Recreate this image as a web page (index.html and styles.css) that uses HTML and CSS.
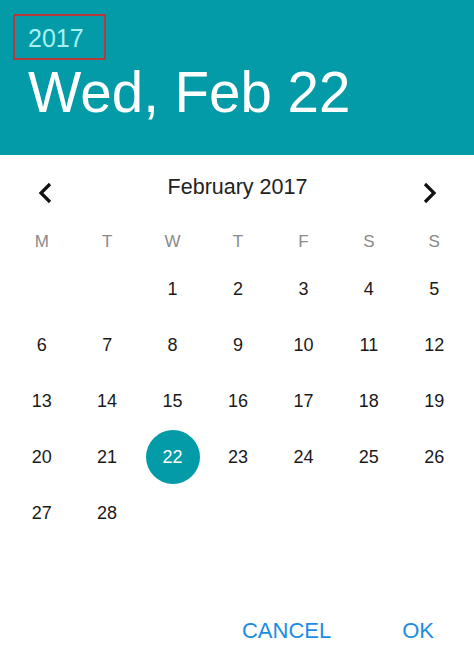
FILE: index.html
```html
<!DOCTYPE html>
<html>
<head>
<meta charset="utf-8">
<link rel="stylesheet" href="styles.css">
</head>
<body>
<div class="picker">
  <header class="header">
    <div class="year-box"><span class="year">2017</span></div>
    <div class="date">Wed, Feb 22</div>
  </header>
  <section class="calendar">
    <div class="nav">
      <span class="arrow">
        <svg width="20" height="24" viewBox="0 0 20 24"><path d="M14 3 L5 12 L14 21" fill="none" stroke="#111" stroke-width="3.2"/></svg>
      </span>
      <span class="month">February 2017</span>
      <span class="arrow">
        <svg width="20" height="24" viewBox="0 0 20 24"><path d="M6 3 L15 12 L6 21" fill="none" stroke="#111" stroke-width="3.2"/></svg>
      </span>
    </div>
    <div class="weekdays">
      <span>M</span><span>T</span><span>W</span><span>T</span><span>F</span><span>S</span><span>S</span>
    </div>
    <div class="days">
      <span></span><span></span><span>1</span><span>2</span><span>3</span><span>4</span><span>5</span>
      <span>6</span><span>7</span><span>8</span><span>9</span><span>10</span><span>11</span><span>12</span>
      <span>13</span><span>14</span><span>15</span><span>16</span><span>17</span><span>18</span><span>19</span>
      <span>20</span><span>21</span><span class="selected"><b>22</b></span><span>23</span><span>24</span><span>25</span><span>26</span>
      <span>27</span><span>28</span>
    </div>
  </section>
  <footer class="actions">
    <span class="btn">CANCEL</span>
    <span class="btn ok">OK</span>
  </footer>
</div>
</body>
</html>
```
FILE: styles.css
```css
html, body {
  margin: 0;
  padding: 0;
  background: #fff;
}
body {
  font-family: "Liberation Sans", Arial, sans-serif;
  width: 474px;
  height: 668px;
  overflow: hidden;
}
.header {
  background: #029ba7;
  height: 155px;
  padding-top: 14px;
  box-sizing: border-box;
}
.year-box {
  margin-left: 13px;
  width: 89px;
  height: 42px;
  border: 2px solid #b8393c;
  box-sizing: content-box;
}
.year {
  display: block;
  padding-left: 13px;
  padding-top: 1px;
  font-size: 25px;
  line-height: 42px;
  color: #a6f1f3;
}
.date {
  margin-top: 5px;
  margin-left: 28px;
  font-size: 56.5px;
  line-height: 55px;
  color: #fff;
}
.calendar {
  padding: 0 7px 0 9px;
}
.nav {
  height: 68px;
  display: flex;
  align-items: center;
  justify-content: space-between;
  padding: 0 28px 0 27px;
}
.arrow {
  display: flex;
  margin-top: 8px;
}
.month {
  font-size: 21.5px;
  color: #222;
  margin-top: -4px;
}
.weekdays, .days {
  display: grid;
  grid-template-columns: repeat(7, 1fr);
}
.weekdays span {
  height: 38px;
  line-height: 38px;
  text-align: center;
  font-size: 17px;
  color: #8a8a8a;
}
.days span {
  height: 56px;
  display: flex;
  align-items: center;
  justify-content: center;
  font-size: 18px;
  color: #1a1a1a;
}
.days .selected b {
  font-weight: normal;
  width: 54px;
  height: 54px;
  border-radius: 50%;
  background: #029ba7;
  color: #fff;
  display: flex;
  align-items: center;
  justify-content: center;
}
.actions {
  display: flex;
  justify-content: flex-end;
  gap: 71px;
  padding: 78px 40px 0 0;
}
.btn {
  font-size: 22px;
  color: #1a8de3;
  line-height: 24px;
}
```
